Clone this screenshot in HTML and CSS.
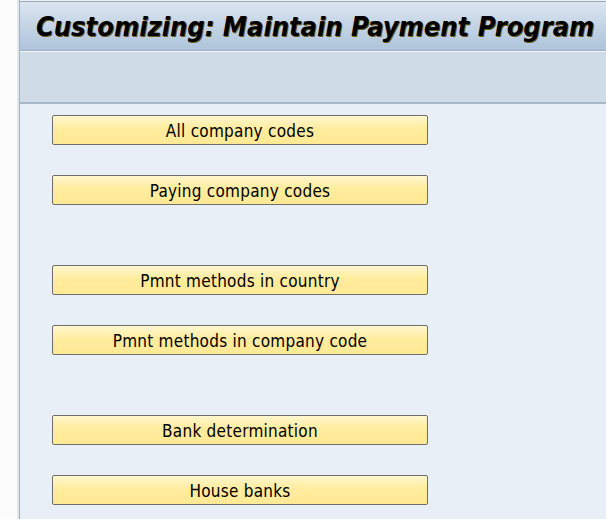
FILE: index.html
```html
<!DOCTYPE html>
<html>
  <head>
    <meta charset="utf-8" />
    <title>Customizing: Maintain Payment Program</title>
    <link rel="stylesheet" href="styles.css">
  </head>
  <body>
    <div class="frame">
      <div class="gutter"></div>
      <div class="window">
        <div class="title-bar">
          <h1>Customizing: Maintain Payment Program</h1>
        </div>
        <div class="toolbar"></div>
        <div class="content">
          <div class="group">
            <button class="button">All company codes</button>
            <button class="button">Paying company codes</button>
          </div>
          <div class="group">
            <button class="button">Pmnt methods in country</button>
            <button class="button">Pmnt methods in company code</button>
          </div>
          <div class="group">
            <button class="button">Bank determination</button>
            <button class="button">House banks</button>
          </div>
        </div>
      </div>
    </div>
  </body>
</html>
```

FILE: styles.css
```css
html, body {
  margin: 0;
  padding: 0;
  height: 100%;
  overflow: hidden;
}

body {
  font-family: "DejaVu Sans Condensed", Tahoma, sans-serif;
  background-color: #fcfcfc;
}

.frame {
  display: flex;
  height: 100%;
}

.gutter {
  width: 17px;
  flex-shrink: 0;
  border-right: 2px solid #e3e8ef;
}

.window {
  flex: 1;
  display: flex;
  flex-direction: column;
  border-left: 1px solid #a3b1c2;
  background-color: #e8eff7;
}

.title-bar {
  height: 48px;
  margin-top: 1px;
  border-top: 1px solid #9eabb9;
  border-bottom: 1px solid #9daec2;
  background: linear-gradient(#dae5f0, #aec3da);
  display: flex;
  align-items: center;
  padding-left: 16px;
}

.title-bar h1 {
  margin: 0;
  font-family: "DejaVu Sans Condensed", Tahoma, sans-serif;
  font-size: 27px;
  font-weight: bold;
  font-style: italic;
  color: #000000;
  white-space: nowrap;
  text-shadow: 1px 1px 0 #6b5a1e;
}

.toolbar {
  height: 50px;
  border-top: 1px solid #f2f6fa;
  border-bottom: 2px solid #a9b8c9;
  background-color: #cfdce8;
}

.content {
  padding: 11px 0 0 32px;
  display: flex;
  flex-direction: column;
  gap: 60px;
}

.group {
  display: flex;
  flex-direction: column;
  gap: 30px;
}

.button {
  width: 376px;
  height: 30px;
  padding: 2px 0 0;
  border: 1px solid #6e6e6e;
  border-radius: 2px;
  background: linear-gradient(#fff7cf, #ffec9e 45%, #ffe995);
  font-family: "DejaVu Sans Condensed", Tahoma, sans-serif;
  font-size: 17px;
  letter-spacing: 0.25px;
  color: #000000;
  text-align: center;
  cursor: pointer;
}
```
